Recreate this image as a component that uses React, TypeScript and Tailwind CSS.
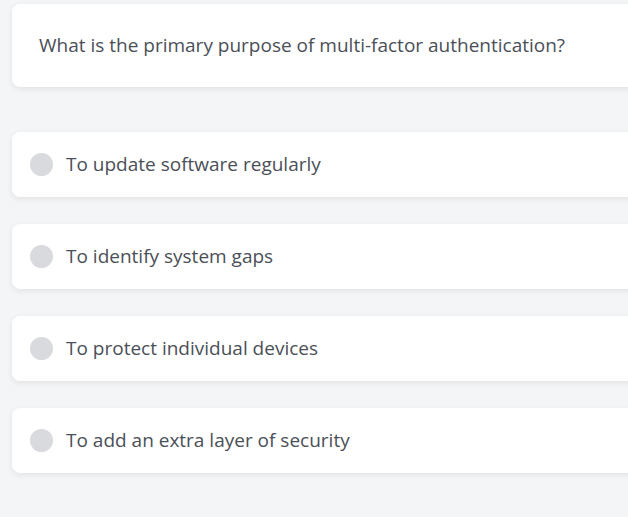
const options = [
  "To update software regularly",
  "To identify system gaps",
  "To protect individual devices",
  "To add an extra layer of security",
];

export default function App() {
  return (
    <div
      className="w-[628px] h-[517px] overflow-hidden bg-[#f4f5f7]"
      style={{ fontFamily: '"Open Sans", "Noto Sans", Arial, sans-serif' }}
    >
      <div className="w-[680px] pl-3 pt-1">
        {/* Question */}
        <div className="h-[83px] flex items-center pl-[27px] bg-white rounded-lg shadow-[0_2px_6px_rgba(0,0,0,0.08)]">
          <p className="text-[19px] text-[#4b4f57]">
            What is the primary purpose of multi-factor authentication?
          </p>
        </div>

        {/* Options */}
        <div className="mt-[45px] flex flex-col gap-[27px]">
          {options.map((opt, i) => (
            <label
              key={i}
              className="h-[65px] flex items-center gap-[13px] pl-[18px] bg-white rounded-lg shadow-[0_2px_6px_rgba(0,0,0,0.08)] cursor-pointer"
            >
              <span className="w-[23px] h-[23px] rounded-full bg-[#d9dadd] shrink-0" />
              <span className="text-[19px] text-[#4b4f57]">{opt}</span>
            </label>
          ))}
        </div>
      </div>
    </div>
  );
}
